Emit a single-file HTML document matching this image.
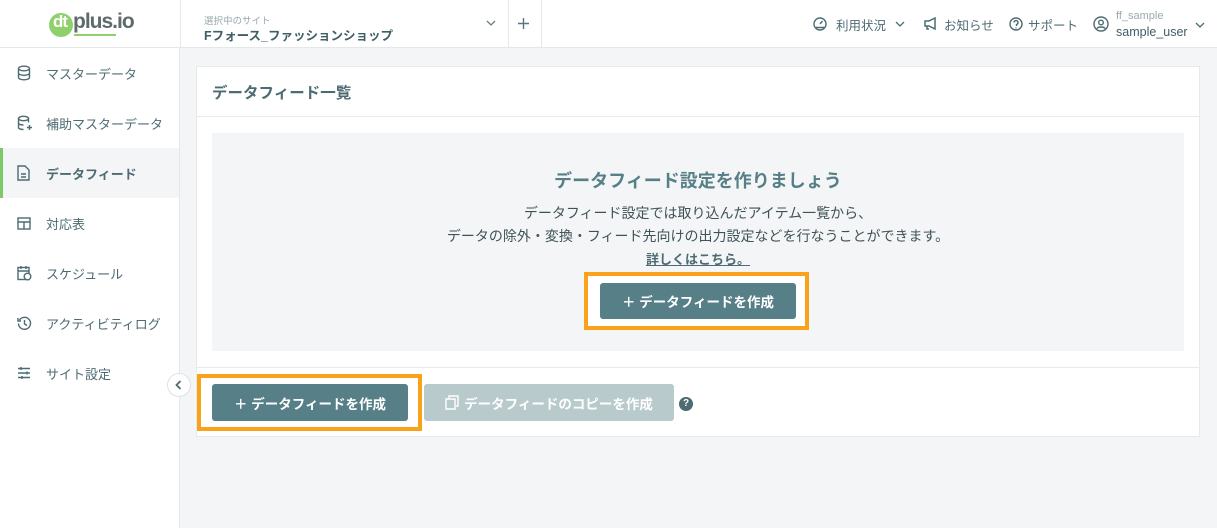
<!DOCTYPE html><html><head><meta charset="utf-8"><style>
*{box-sizing:border-box;margin:0;padding:0}
body{width:1217px;height:528px;background:#f4f5f7;font-family:"Liberation Sans","Noto Sans CJK JP",sans-serif;color:#4d6b72;position:relative;overflow:hidden}
.abs{position:absolute}
.hdr{left:0;top:0;width:1217px;height:48px;background:#fff;border-bottom:1px solid #e3e8ea}
.side{left:0;top:48px;width:180px;height:480px;background:#fff;border-right:1px solid #e3e8ea}
.nav{position:absolute;left:0;width:179px;height:50px;font-size:13px;display:flex;align-items:center;padding-left:46px;color:#4d6b72}
.nav svg{position:absolute;left:17px}
.card{left:196px;top:66px;width:1004px;height:371px;background:#fff;border:1px solid #e6eaeb}
.btn{background:#567f87;color:#fff;font-weight:bold;font-size:13.5px;border-radius:3px;display:flex;align-items:center;justify-content:center}
.ob{border:4px solid #f9a21a;background:#fff}
.ht{position:absolute;top:15px;font-size:12.5px;color:#4d6b72}
</style></head><body>
<div class="abs hdr"></div>
<div class="abs" style="left:180px;top:0;width:1px;height:48px;background:#e3e8ea"></div>
<div class="abs" style="left:508px;top:0;width:1px;height:48px;background:#e3e8ea"></div>
<div class="abs" style="left:541px;top:0;width:1px;height:48px;background:#e3e8ea"></div>
<div class="abs" style="left:49px;top:13px;width:24px;height:24px;border-radius:50%;background:#8fd06a"></div>
<div class="abs" style="left:53px;top:12px;font-size:17px;font-weight:bold;color:#fff;letter-spacing:-1px">dt</div>
<div class="abs" style="left:73px;top:10px;font-size:21px;font-weight:bold;color:#5f6a6c;letter-spacing:-1px">plus.io</div>
<div class="abs" style="left:74px;top:34px;width:42px;height:2px;background:#8fd06a"></div>
<div class="abs" style="left:204px;top:13px;font-size:9.5px;color:#98a8ac">選択中のサイト</div>
<div class="abs" style="left:204px;top:25px;font-size:12.5px;font-weight:bold;color:#3f5e65">Fフォース_ファッションショップ</div>
<svg class="abs" style="left:486px;top:20px" width="10" height="6" viewBox="0 0 10 6" fill="none" stroke="#6a8085" stroke-width="1.3"><path d="M1 1l4 4 4-4"/></svg>
<svg class="abs" style="left:518px;top:18px" width="11" height="11" viewBox="0 0 11 11" stroke="#5a767c" stroke-width="1.4"><path d="M5.5 0v11M0 5.5h11"/></svg>
<svg class="abs" style="left:813px;top:17px" width="14" height="14" viewBox="0 0 14 14" fill="none" stroke="#4d6b72" stroke-width="1.4"><circle cx="7" cy="7" r="6"/><path d="M7 7l2.5-3M3 10.5h8"/></svg>
<div class="ht" style="left:836px">利用状況</div>
<svg class="abs" style="left:895px;top:21px" width="10" height="6" viewBox="0 0 10 6" fill="none" stroke="#4d6b72" stroke-width="1.3"><path d="M1 1l4 4 4-4"/></svg>
<svg class="abs" style="left:924px;top:17px" width="15" height="13" viewBox="0 0 15 13" fill="none" stroke="#4d6b72" stroke-width="1.5"><path d="M1 4h4l6-3v11l-6-3H1zM3 9v3h2"/></svg>
<div class="ht" style="left:944px">お知らせ</div>
<svg class="abs" style="left:1009px;top:17px" width="14" height="14" viewBox="0 0 14 14" fill="none" stroke="#4d6b72" stroke-width="1.4"><circle cx="7" cy="7" r="6"/><path d="M5 5.5a2 2 0 1 1 2.5 2V9M7 10.5v1"/></svg>
<div class="ht" style="left:1028px">サポート</div>
<svg class="abs" style="left:1093px;top:16px" width="16" height="16" viewBox="0 0 16 16" fill="none" stroke="#4d6b72" stroke-width="1.4"><circle cx="8" cy="8" r="7"/><circle cx="8" cy="6.5" r="2.3"/><path d="M4 12.5c1-2 7-2 8 0"/></svg>
<div class="abs" style="left:1116px;top:10px;font-size:11px;color:#9aabaf">ff_sample</div>
<div class="abs" style="left:1116px;top:25px;font-size:12.5px;color:#3f5e65">sample_user</div>
<svg class="abs" style="left:1195px;top:22px" width="10" height="6" viewBox="0 0 10 6" fill="none" stroke="#4d6b72" stroke-width="1.3"><path d="M1 1l4 4 4-4"/></svg>
<div class="abs side"></div>
<div class="abs" style="left:0;top:148px;width:179px;height:50px;background:#f4f5f7"></div>
<div class="abs" style="left:0;top:148px;width:3px;height:50px;background:#7cc96a"></div>
<div class="nav" style="top:48px">マスターデータ<svg width="14" height="16" viewBox="0 0 14 16" fill="none" stroke="#4d6b72" stroke-width="1.4"><ellipse cx="7" cy="3.5" rx="5.5" ry="2.3"/><path d="M1.5 3.5v9c0 1.3 2.5 2.3 5.5 2.3s5.5-1 5.5-2.3v-9M1.5 8c0 1.3 2.5 2.3 5.5 2.3s5.5-1 5.5-2.3"/></svg></div>
<div class="nav" style="top:98px">補助マスターデータ<svg width="16" height="16" viewBox="0 0 16 16" fill="none" stroke="#4d6b72" stroke-width="1.4"><ellipse cx="6.5" cy="3.5" rx="5" ry="2.2"/><path d="M1.5 3.5v9c0 1.2 2.2 2 5 2M1.5 8c0 1.2 2.2 2 5 2M11.5 3.5v4M12.5 10v5M10 12.5h5"/></svg></div>
<div class="nav" style="top:148px;font-weight:bold">データフィード<svg width="13" height="16" viewBox="0 0 13 16" fill="none" stroke="#4d6b72" stroke-width="1.4"><path d="M1 1h7l4 4v10H1z"/><path d="M4 9h5M4 12h5"/></svg></div>
<div class="nav" style="top:198px">対応表<svg width="14" height="13" viewBox="0 0 14 13" fill="none" stroke="#4d6b72" stroke-width="1.4"><rect x="1" y="1" width="12" height="11"/><path d="M1 5h12M7 5v7"/></svg></div>
<div class="nav" style="top:248px">スケジュール<svg width="15" height="16" viewBox="0 0 15 16" fill="none" stroke="#4d6b72" stroke-width="1.4"><rect x="1" y="2.5" width="11" height="12"/><path d="M4 1v3M9 1v3M1 6h11"/><circle cx="10.5" cy="11.5" r="3.3" fill="#fff"/></svg></div>
<div class="nav" style="top:298px">アクティビティログ<svg width="15" height="15" viewBox="0 0 15 15" fill="none" stroke="#4d6b72" stroke-width="1.4"><path d="M2.5 4A6 6 0 1 1 1.5 7.5M1 2v3h3M7.5 4v4l2.5 1.5"/></svg></div>
<div class="nav" style="top:348px">サイト設定<svg width="14" height="14" viewBox="0 0 14 14" fill="none" stroke="#4d6b72" stroke-width="1.4"><path d="M1 2.5h12M1 7h12M1 11.5h12M4 1v3M10 5.5v3M5 10v3"/></svg></div>
<div class="abs" style="left:167px;top:373px;width:24px;height:24px;border-radius:50%;background:#fff;border:1px solid #dde3e5"></div>
<svg class="abs" style="left:175px;top:380px" width="7" height="10" viewBox="0 0 7 10" fill="none" stroke="#4d6b72" stroke-width="1.8"><path d="M5.5 1L1.5 5l4 4"/></svg>
<div class="abs card"></div>
<div class="abs" style="left:197px;top:116px;width:1002px;height:1px;background:#e6eaeb"></div>
<div class="abs" style="left:212px;top:81px;font-size:15.5px;font-weight:bold;color:#4d6b72">データフィード一覧</div>
<div class="abs" style="left:212px;top:133px;width:972px;height:218px;background:#f4f5f7"></div>
<div class="abs" style="left:212px;top:167px;width:972px;text-align:center;font-size:18px;font-weight:bold;color:#567f87">データフィード設定を作りましょう</div>
<div class="abs" style="left:212px;top:202px;width:972px;text-align:center;font-size:14px;line-height:23px;color:#3f5357">データフィード設定では取り込んだアイテム一覧から、<br>データの除外・変換・フィード先向けの出力設定などを行なうことができます。<br><span style="text-decoration:underline;font-weight:bold;color:#4d6b72;font-size:13px">詳しくはこちら。</span></div>
<div class="abs ob" style="left:584px;top:272px;width:225px;height:58px"></div>
<div class="abs btn" style="left:600px;top:283px;width:196px;height:36px">＋ データフィードを作成</div>
<div class="abs" style="left:197px;top:367px;width:1002px;height:1px;background:#e6eaeb"></div>
<div class="abs ob" style="left:197px;top:374px;width:225px;height:57px"></div>
<div class="abs btn" style="left:212px;top:384px;width:196px;height:37px">＋ データフィードを作成</div>
<div class="abs btn" style="left:424px;top:384px;width:250px;height:37px;background:#b9cacd"><svg width="14" height="15" viewBox="0 0 14 15" fill="none" stroke="#fff" stroke-width="1.4" style="margin-right:5px"><path d="M4 3V1h9v10h-2M1 4h9v10H1z"/></svg>データフィードのコピーを作成</div>
<div class="abs" style="left:679px;top:397px;width:14px;height:14px;border-radius:50%;background:#4d6b72;color:#fff;font-size:10px;font-weight:bold;text-align:center;line-height:14px">?</div>
</body></html>
